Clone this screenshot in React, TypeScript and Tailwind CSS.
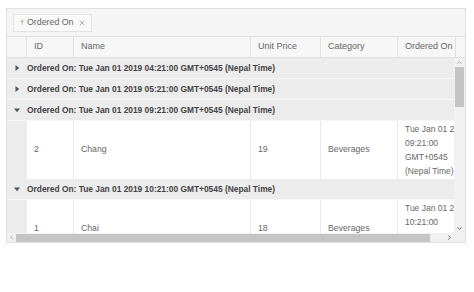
import { ChevronUp, ChevronDown, ChevronLeft, ChevronRight, X } from "lucide-react";

const groups = [
  { label: "Tue Jan 01 2019 04:21:00 GMT+0545 (Nepal Time)", open: false },
  { label: "Tue Jan 01 2019 05:21:00 GMT+0545 (Nepal Time)", open: false },
  {
    label: "Tue Jan 01 2019 09:21:00 GMT+0545 (Nepal Time)",
    open: true,
    row: { id: "2", name: "Chang", price: "19", category: "Beverages", time: "09:21:00" },
  },
  {
    label: "Tue Jan 01 2019 10:21:00 GMT+0545 (Nepal Time)",
    open: true,
    row: { id: "1", name: "Chai", price: "18", category: "Beverages", time: "10:21:00" },
  },
];

function Caret({ open }: { open: boolean }) {
  return (
    <svg width="6" height="6" viewBox="0 0 8 8" className="text-[#555]">
      {open ? <path d="M0 2 L8 2 L4 7 Z" fill="currentColor" /> : <path d="M2 0 L7 4 L2 8 Z" fill="currentColor" />}
    </svg>
  );
}

export default function App() {
  return (
    <div className="w-[474px] h-[292px] bg-white pt-2 pl-1.5 font-['Liberation_Sans',Arial,sans-serif] text-[8.7px] text-[#666]">
      <div className="w-[460px] border border-[#e0e0e0] bg-white">
        {/* group drop area */}
        <div className="h-[27px] bg-[#f5f5f5] flex items-center px-1.5">
          <div className="h-[18px] flex items-center gap-[3px] pl-[6px] pr-[5px] border border-[#e3e3e3] bg-[#f9f9f9] text-[8.8px] whitespace-nowrap">
            <span className="text-[8px] text-[#555]">↑</span>
            <span>Ordered On</span>
            <X className="w-[8px] h-[8px] ml-[2px] text-[#888]" strokeWidth={2} />
          </div>
        </div>

        {/* header */}
        <div className="h-[22px] flex bg-[#f7f7f7] border-t border-b border-[#e0e0e0] text-[9px]">
          <div className="w-[20px] shrink-0 border-r border-[#e0e0e0]" />
          <div className="w-[47px] shrink-0 border-r border-[#e0e0e0] pl-[7px] flex items-center">ID</div>
          <div className="w-[177px] shrink-0 border-r border-[#e0e0e0] pl-[7px] flex items-center">Name</div>
          <div className="w-[70px] shrink-0 border-r border-[#e0e0e0] pl-[7px] flex items-center">Unit Price</div>
          <div className="w-[77px] shrink-0 border-r border-[#e0e0e0] pl-[7px] flex items-center">Category</div>
          <div className="w-[58px] shrink-0 border-r border-[#e0e0e0] pl-[7px] flex items-center whitespace-nowrap">Ordered On</div>
          <div className="flex-1" />
        </div>

        {/* body */}
        <div className="h-[175px] flex">
          <div className="w-[448px] overflow-hidden">
            <div className="w-[520px]">
              {groups.map((g) => (
                <div key={g.label}>
                  <div className="h-[21px] flex items-center bg-[#ececec] border-b border-[#f6f6f6] font-bold text-[8.4px] text-[#444]">
                    <div className="w-[20px] flex justify-center">
                      <Caret open={g.open} />
                    </div>
                    <span className="whitespace-nowrap">Ordered On: {g.label}</span>
                  </div>
                  {g.row && (
                    <div className="h-[58px] flex">
                      <div className="w-[20px] shrink-0 bg-[#ececec]" />
                      <div className="w-[47px] shrink-0 border-r border-[#e8e8e8] pl-[7px] flex items-center">{g.row.id}</div>
                      <div className="w-[177px] shrink-0 border-r border-[#e8e8e8] pl-[7px] flex items-center">{g.row.name}</div>
                      <div className="w-[70px] shrink-0 border-r border-[#e8e8e8] pl-[7px] flex items-center">{g.row.price}</div>
                      <div className="w-[77px] shrink-0 border-r border-[#e8e8e8] pl-[7px] flex items-center">{g.row.category}</div>
                      <div className="w-[110px] shrink-0 pl-[7px] flex flex-col justify-center leading-[14px] whitespace-nowrap text-[8.5px]">
                        <span>Tue Jan 01 2019</span>
                        <span>{g.row.time}</span>
                        <span>GMT+0545</span>
                        <span>(Nepal Time)</span>
                      </div>
                    </div>
                  )}
                </div>
              ))}
            </div>
          </div>
          {/* vertical scrollbar */}
          <div className="w-[11px] bg-[#f1f1f1] flex flex-col items-center">
            <ChevronUp className="w-[7px] h-[7px] mt-[1px] text-[#a0a0a0]" strokeWidth={3} />
            <div className="w-[9px] h-[40px] mt-[1px] bg-[#c4c4c4]" />
            <div className="flex-1" />
            <ChevronDown className="w-[7px] h-[7px] mb-[1px] text-[#505050]" strokeWidth={3} />
          </div>
        </div>

        {/* horizontal scrollbar */}
        <div className="h-[9px] flex items-center bg-[#f1f1f1]">
          <ChevronLeft className="w-[7px] h-[7px] ml-[1px] text-[#a0a0a0]" strokeWidth={3} />
          <div className="w-[414px] h-[8px] ml-[1px] bg-[#c4c4c4]" />
          <div className="flex-1" />
          <ChevronRight className="w-[7px] h-[7px] mr-[12px] text-[#505050]" strokeWidth={3} />
        </div>
      </div>
    </div>
  );
}
